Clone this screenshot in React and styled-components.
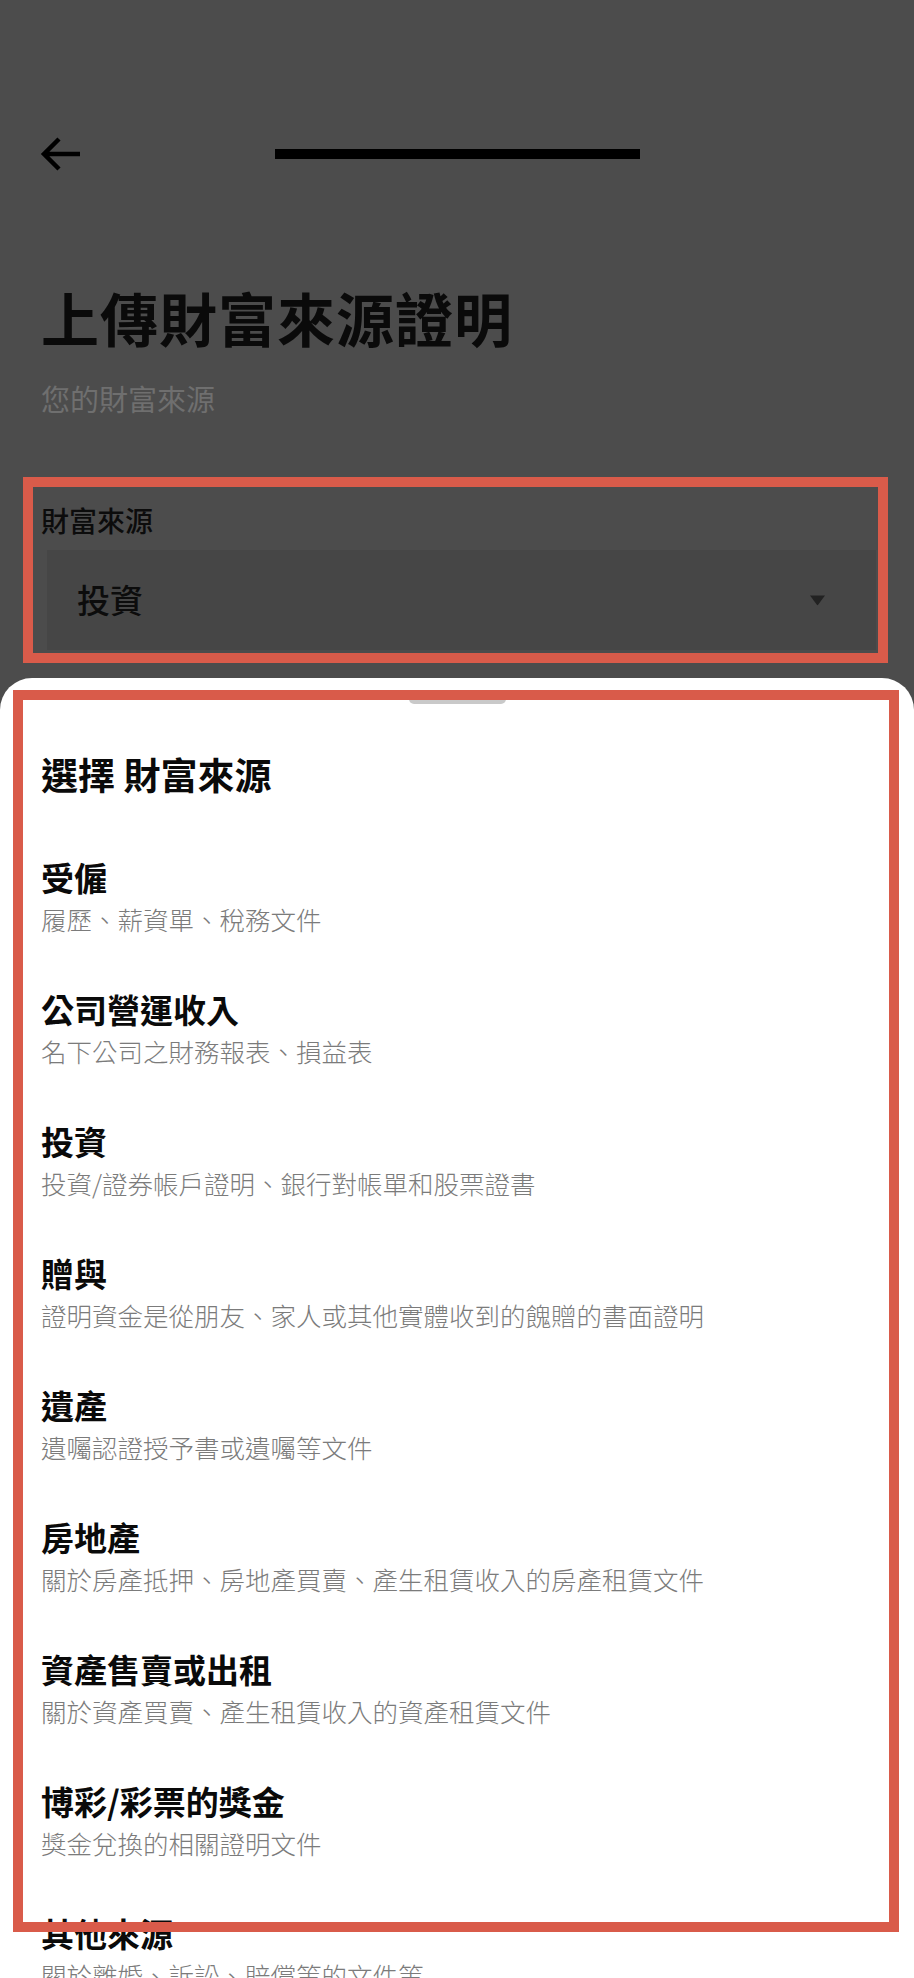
import React from "react";
import styled, { createGlobalStyle } from "styled-components";

const GlobalStyle = createGlobalStyle`
  html, body {
    margin: 0;
    padding: 0;
    background: #4c4c4c;
  }
  body {
    font-family: "Noto Sans CJK TC", "Noto Sans", "Liberation Sans", sans-serif;
    -webkit-font-smoothing: antialiased;
  }
`;

// page frame, fixed to the phone viewport
const Screen = styled.div`
  width: 914px;
  height: 1978px;
  overflow: hidden;
  background: #4c4c4c;
  display: flex;
  flex-direction: column;
`;

const Top = styled.div`
  padding: 130px 26px 0 23px;
  display: flex;
  flex-direction: column;
`;

const Header = styled.div`
  display: grid;
  grid-template-columns: 1fr 365px 1fr;
  align-items: center;
  height: 48px;
  margin-left: -23px;
  margin-right: -26px;
`;

const BackButton = styled.button`
  border: none;
  background: none;
  padding: 0;
  margin-left: 40px;
  width: 44px;
  height: 40px;
  display: flex;
  align-items: center;
  cursor: pointer;
  color: #000;
`;

const TitleBar = styled.div`
  height: 10px;
  background: #000;
`;

const PageTitle = styled.h1`
  margin: 110px 0 0 18px;
  font-size: 58px;
  line-height: 58px;
  font-weight: 700;
  color: #0a0a0a;
  letter-spacing: 1px;
`;

const PageSubtitle = styled.p`
  margin: 38px 0 0 18px;
  font-size: 29px;
  line-height: 29px;
  font-weight: 400;
  color: #6f6f6f;
`;

// red annotation frame around a block
const Highlight = styled.div`
  border: 10px solid #d95b4a;
  box-sizing: border-box;
`;

const Field = styled(Highlight)`
  margin-top: 64px;
  height: 186px;
  display: flex;
  flex-direction: column;
  padding: 19px 2px 3px 8px;
`;

const FieldLabel = styled.label`
  font-size: 28px;
  line-height: 28px;
  font-weight: 500;
  color: #0c0c0c;
`;

const Select = styled.div`
  margin: 16px 0 0 6px;
  flex: 1;
  background: #464646;
  display: flex;
  align-items: center;
  justify-content: space-between;
  padding: 0 50px 2px 30px;
`;

const SelectValue = styled.span`
  font-size: 33px;
  line-height: 33px;
  font-weight: 500;
  color: #0c0c0c;
`;

const Caret = styled.svg`
  width: 17px;
  height: 12px;
  margin-top: 2px;
`;

const Sheet = styled.div`
  position: relative;
  margin-top: 15px;
  flex: 1;
  background: #fff;
  border-radius: 32px 32px 0 0;
  display: flex;
  flex-direction: column;
  padding: 0 41px;
`;

const Handle = styled.div`
  align-self: center;
  width: 97px;
  height: 10px;
  border-radius: 5px;
  background: #c9c9c9;
  margin-top: 16px;
`;

const SheetFrame = styled(Highlight)`
  position: absolute;
  top: 12px;
  left: 13px;
  right: 15px;
  height: 1242px;
  pointer-events: none;
`;

const SheetTitle = styled.h2`
  margin: 52px 0 0;
  font-size: 37px;
  line-height: 37px;
  font-weight: 700;
  color: #0a0a0a;
`;

const OptionList = styled.ul`
  list-style: none;
  margin: 68px 0 0;
  padding: 0;
  display: flex;
  flex-direction: column;
  gap: 61px;
`;

const Option = styled.li`
  display: flex;
  flex-direction: column;
  gap: 12px;
  cursor: pointer;
`;

const OptionName = styled.span`
  font-size: 33px;
  line-height: 33px;
  font-weight: 700;
  color: #0a0a0a;
`;

const OptionHint = styled.span`
  font-size: 25.5px;
  line-height: 26px;
  font-weight: 300;
  color: #7b7b7b;
`;

const sources = [
  { name: "受僱", hint: "履歷、薪資單、稅務文件" },
  { name: "公司營運收入", hint: "名下公司之財務報表、損益表" },
  { name: "投資", hint: "投資/證券帳戶證明、銀行對帳單和股票證書" },
  { name: "贈與", hint: "證明資金是從朋友、家人或其他實體收到的餽贈的書面證明" },
  { name: "遺產", hint: "遺囑認證授予書或遺囑等文件" },
  { name: "房地產", hint: "關於房產抵押、房地產買賣、產生租賃收入的房產租賃文件" },
  { name: "資產售賣或出租", hint: "關於資產買賣、產生租賃收入的資產租賃文件" },
  { name: "博彩/彩票的獎金", hint: "獎金兌換的相關證明文件" },
  { name: "其他來源", hint: "關於離婚、訴訟、賠償等的文件等" },
];

const App = () => {
  return (
    <Screen>
      <GlobalStyle />
      <Top>
        <Header>
          <BackButton aria-label="back">
            <svg width="44" height="40" viewBox="0 0 44 40" fill="none">
              <path
                d="M40 20H6M19 5L4 20l15 15"
                stroke="currentColor"
                strokeWidth="4.5"
              />
            </svg>
          </BackButton>
          <TitleBar />
          <span />
        </Header>

        <PageTitle>上傳財富來源證明</PageTitle>
        <PageSubtitle>您的財富來源</PageSubtitle>

        <Field>
          <FieldLabel>財富來源</FieldLabel>
          <Select>
            <SelectValue>投資</SelectValue>
            <Caret viewBox="0 0 17 12">
              <path d="M1 1.5h15L9.3 10.6a1 1 0 0 1-1.6 0z" fill="#222" />
            </Caret>
          </Select>
        </Field>
      </Top>

      <Sheet>
        <Handle />
        <SheetTitle>選擇 財富來源</SheetTitle>
        <OptionList>
          {sources.map((s) => (
            <Option key={s.name}>
              <OptionName>{s.name}</OptionName>
              <OptionHint>{s.hint}</OptionHint>
            </Option>
          ))}
        </OptionList>
        <SheetFrame />
      </Sheet>
    </Screen>
  );
};

export default App;
